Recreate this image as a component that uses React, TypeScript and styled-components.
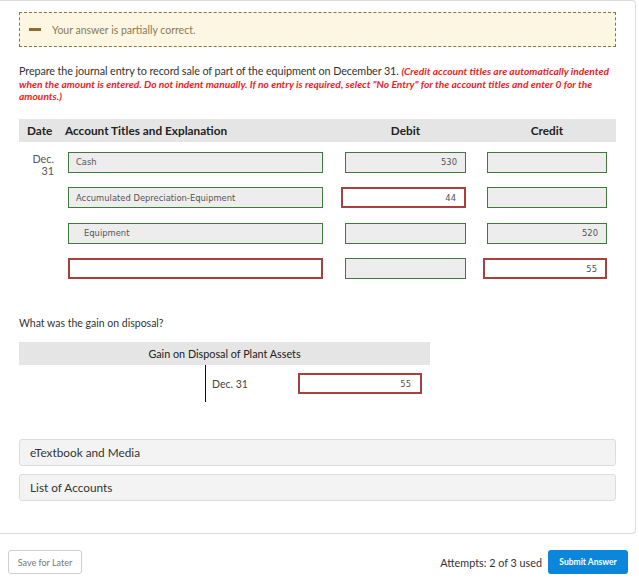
import React from 'react';
import styled, { createGlobalStyle } from 'styled-components';

const GlobalStyle = createGlobalStyle`
  body {
    margin: 0;
    background: #fff;
    font-family: Lato, "Open Sans", Arial, sans-serif;
    color: #333;
  }
`;

const Card = styled.div`
  width: 636px;
  box-sizing: border-box;
  border: 1px solid #dcdcdc;
  border-left: none;
  border-radius: 0 4px 4px 0;
  padding: 11px 19px 32px 19px;
`;

const Feedback = styled.div`
  height: 35px;
  box-sizing: border-box;
  border: 1px dashed #8d7441;
  background: #fcf6e3;
  display: flex;
  align-items: center;
  padding-left: 9px;
  gap: 11px;
  font-size: 10.5px;
  color: #8a7a55;
`;

const Minus = styled.span`
  display: block;
  width: 12px;
  height: 3px;
  background: #8b6c33;
`;

const Prompt = styled.p`
  margin: 18px 0 0;
  font-size: 10.8px;
  line-height: 12.6px;
  color: #333;
  letter-spacing: -0.1px;
`;

const Note = styled.em`
  color: #ee1c24;
  font-weight: 700;
  font-size: 10.25px;
  line-height: 12.6px;
  letter-spacing: 0;
`;

const Grid = styled.div`
  display: grid;
  grid-template-columns: 49px 255px 22px 121px 21px 120px 10px;
  grid-template-rows: 21px;
`;

const HeadRow = styled(Grid)`
  margin-top: 16px;
  grid-template-rows: 23px;
  background: #e5e5e5;
  align-items: center;
  font-size: 11.8px;
  font-weight: 700;
  color: #222;
`;

const HeadCell = styled.div<{ $center?: boolean; $offset?: number }>`
  text-align: ${(p) => (p.$center ? 'center' : 'left')};
  padding-left: ${(p) => p.$offset ?? 0}px;
  margin-left: ${(p) => (p.$offset === undefined ? -3 : 0)}px;
  white-space: nowrap;
`;

const Rows = styled.div`
  display: flex;
  flex-direction: column;
  gap: 14.5px;
  margin-top: 10px;
`;

const DateCell = styled.div`
  text-align: right;
  padding-right: 14px;
  font-size: 10.8px;
  line-height: 12px;
  color: #555;
  margin-top: 1px;
`;

const Field = styled.div<{ $wrong?: boolean; $num?: boolean; $indent?: boolean }>`
  height: 21px;
  box-sizing: border-box;
  display: flex;
  align-items: center;
  justify-content: ${(p) => (p.$num ? 'flex-end' : 'flex-start')};
  padding: 0 ${(p) => (p.$num ? 8 : 0)}px 0 ${(p) => (p.$indent ? 15 : 7)}px;
  border: ${(p) => (p.$wrong ? '2px solid #a8403e' : '1px solid #3f7a3c')};
  background: ${(p) => (p.$wrong ? '#fff' : '#ededed')};
  margin-left: ${(p) => (p.$wrong && p.$num ? -4 : 0)}px;
  font-family: "DejaVu Sans", Verdana, sans-serif;
  font-size: 8.4px;
  color: #555;
  white-space: nowrap;
`;

const Question = styled.div`
  margin-top: 38px;
  font-size: 10.5px;
  color: #333;
`;

const TAccount = styled.div`
  width: 411px;
  margin-top: 13px;
`;

const THead = styled.div`
  height: 23px;
  background: #e5e5e5;
  display: flex;
  align-items: center;
  justify-content: center;
  font-size: 10.8px;
  color: #222;
`;

const TBody = styled.div`
  display: grid;
  grid-template-columns: 186px 93px 124px;
  height: 37px;
`;

const TCredit = styled.div`
  border-left: 1px solid #111;
  grid-column: 2;
  display: flex;
  align-items: center;
  padding-left: 6px;
  padding-top: 1px;
  font-size: 10.5px;
  color: #444;
`;

const TField = styled(Field)`
  margin-top: 8px;
  margin-left: 0;
  padding-right: 9px;
`;

const Panels = styled.div`
  display: flex;
  flex-direction: column;
  gap: 8px;
  margin-top: 37px;
`;

const Panel = styled.div`
  height: 27px;
  box-sizing: border-box;
  border: 1px solid #dcdcdc;
  border-radius: 3px;
  background: #f3f3f3;
  display: flex;
  align-items: center;
  padding-left: 10px;
  font-size: 11.8px;
  color: #333;
`;

const Footer = styled.div`
  display: flex;
  align-items: center;
  justify-content: space-between;
  padding: 16px 11px 0 8px;
`;

const SaveButton = styled.button`
  width: 74px;
  height: 24px;
  border: 1px solid #cfcfcf;
  border-radius: 3px;
  background: #fff;
  font-family: Lato, sans-serif;
  font-size: 9px;
  color: #777;
  padding: 0;
`;

const Right = styled.div`
  display: flex;
  align-items: center;
  gap: 6px;
  font-size: 10.8px;
  color: #333;
`;

const SubmitButton = styled.button`
  width: 80px;
  height: 24px;
  border: none;
  border-radius: 3px;
  background: #0b86da;
  color: #fff;
  font-family: Lato, sans-serif;
  font-weight: 700;
  font-size: 8.5px;
  padding: 0;
`;

interface Entry {
  date?: string[];
  account: string;
  accountWrong?: boolean;
  indent?: boolean;
  debit: string;
  debitWrong?: boolean;
  credit: string;
  creditWrong?: boolean;
}

const entries: Entry[] = [
  { date: ['Dec.', '31'], account: 'Cash', debit: '530', credit: '' },
  { account: 'Accumulated Depreciation-Equipment', debit: '44', debitWrong: true, credit: '' },
  { account: 'Equipment', indent: true, debit: '', credit: '520' },
  { account: '', accountWrong: true, debit: '', credit: '55', creditWrong: true },
];

const App: React.FC = () => {
  return (
    <>
      <GlobalStyle />
      <Card>
        <Feedback>
          <Minus />
          Your answer is partially correct.
        </Feedback>
        <Prompt>
          Prepare the journal entry to record sale of part of the equipment on December 31.{' '}
          <Note>
            (Credit account titles are automatically indented when the amount is entered. Do not indent
            manually. If no entry is required, select "No Entry" for the account titles and enter 0 for the
            amounts.)
          </Note>
        </Prompt>

        <HeadRow>
          <HeadCell $offset={8}>Date</HeadCell>
          <HeadCell>Account Titles and Explanation</HeadCell>
          <div />
          <HeadCell $center $offset={0}>Debit</HeadCell>
          <div />
          <HeadCell $center $offset={0}>Credit</HeadCell>
        </HeadRow>
        <Rows>
          {entries.map((e, i) => (
            <Grid key={i}>
              <DateCell>
                {e.date?.map((d) => (
                  <div key={d}>{d}</div>
                ))}
              </DateCell>
              <Field $wrong={e.accountWrong} $indent={e.indent}>
                {e.account}
              </Field>
              <div />
              <Field $num $wrong={e.debitWrong}>
                {e.debit}
              </Field>
              <div />
              <Field $num $wrong={e.creditWrong}>
                {e.credit}
              </Field>
            </Grid>
          ))}
        </Rows>

        <Question>What was the gain on disposal?</Question>
        <TAccount>
          <THead>Gain on Disposal of Plant Assets</THead>
          <TBody>
            <TCredit>Dec. 31</TCredit>
            <TField $num $wrong>
              55
            </TField>
          </TBody>
        </TAccount>

        <Panels>
          <Panel>eTextbook and Media</Panel>
          <Panel>List of Accounts</Panel>
        </Panels>
      </Card>
      <Footer>
        <SaveButton>Save for Later</SaveButton>
        <Right>
          Attempts: 2 of 3 used
          <SubmitButton>Submit Answer</SubmitButton>
        </Right>
      </Footer>
    </>
  );
};

export default App;
